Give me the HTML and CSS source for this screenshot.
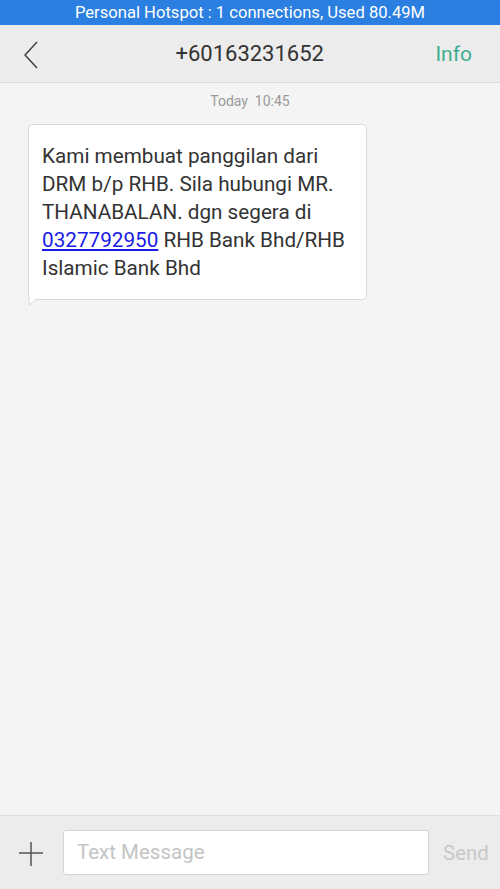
FILE: index.html
```html
<!DOCTYPE html>
<html lang="en">
<head>
    <meta charset="UTF-8">
    <meta name="viewport" content="width=device-width, initial-scale=1.0">
    <title>+60163231652</title>
    <link rel="stylesheet" href="styles.css">
</head>
<body>
    <div class="phone">
        <div class="status">Personal Hotspot : 1 connections, Used 80.49M</div>

        <div class="header">
            <svg class="back" width="16" height="28" viewBox="0 0 16 28">
                <polyline points="13,1 1,14 13,27" fill="none" stroke="#444" stroke-width="1.6"/>
            </svg>
            <h1 class="title">+60163231652</h1>
            <span class="info">Info</span>
        </div>

        <div class="thread">
            <p class="time">Today&nbsp;&nbsp;10:45</p>
            <div class="bubble">
                Kami membuat panggilan dari DRM b/p RHB. Sila hubungi MR. THANABALAN. dgn segera di <a href="#">0327792950</a> RHB Bank Bhd/RHB Islamic Bank Bhd
                <svg class="tail" width="12" height="8" viewBox="0 0 12 8">
                    <polygon points="1,0 1,7 9,0" fill="#fff"/>
                    <polyline points="1,0 1,7 9,1" fill="none" stroke="#d9d9d9" stroke-width="1"/>
                </svg>
            </div>
        </div>

        <div class="composer">
            <svg class="plus" width="26" height="26" viewBox="0 0 26 26">
                <line x1="1" y1="12" x2="25" y2="12" stroke="#555" stroke-width="1.5"/>
                <line x1="13" y1="1" x2="13" y2="25" stroke="#555" stroke-width="1.5"/>
            </svg>
            <div class="input">Text Message</div>
            <span class="send">Send</span>
        </div>
    </div>
</body>
</html>
```

FILE: styles.css
```css
*{
    padding: 0;
    margin: 0;
    box-sizing: border-box;
    font-family: Roboto, "Liberation Sans", sans-serif;
}
body{
    background-color: #f4f4f4;
}
.phone{
    height: 889px;
    width: 500px;
    display: flex;
    flex-direction: column;
}
.status{
    height: 25px;
    background-color: #2b7fe1;
    color: #fff;
    font-size: 16.6px;
    line-height: 26px;
    text-align: center;
}
.header{
    height: 58px;
    background-color: #ececec;
    border-bottom: 1px solid #dcdcdc;
    display: flex;
    align-items: center;
    position: relative;
    padding: 0 28px 0 24px;
}
.back{
    margin-top: 2px;
}
.title{
    flex: 1;
    text-align: center;
    font-size: 22px;
    font-weight: normal;
    color: #333;
    margin-left: 24px;
}
.info{
    font-size: 21px;
    color: #3dae8f;
}
.thread{
    flex: 1;
    padding: 0 28px;
}
.time{
    text-align: center;
    font-size: 14px;
    color: #9a9a9a;
    margin-top: 10px;
    margin-bottom: 15px;
    padding-left: 0;
}
.bubble{
    position: relative;
    width: 339px;
    background-color: #fff;
    border: 1px solid #d9d9d9;
    border-radius: 5px;
    padding: 17px 13px 17px 13px;
    font-size: 20.7px;
    line-height: 28px;
    color: #333;
}
.bubble a{
    color: #1a1ae6;
}
.tail{
    position: absolute;
    left: -1px;
    bottom: -7px;
}
.composer{
    height: 74px;
    background-color: #ececec;
    border-top: 1px solid #dedede;
    display: flex;
    align-items: center;
    padding: 0 10px 0 18px;
}
.plus{
    margin-top: 2px;
}
.input{
    width: 366px;
    height: 45px;
    margin-left: 19px;
    background-color: #fff;
    border: 1px solid #d4d4d4;
    border-radius: 3px;
    font-size: 20.5px;
    line-height: 43px;
    color: #c4c4c4;
    padding-left: 13px;
}
.send{
    margin-left: 14px;
    font-size: 20.5px;
    color: #c8c8c8;
}
```
